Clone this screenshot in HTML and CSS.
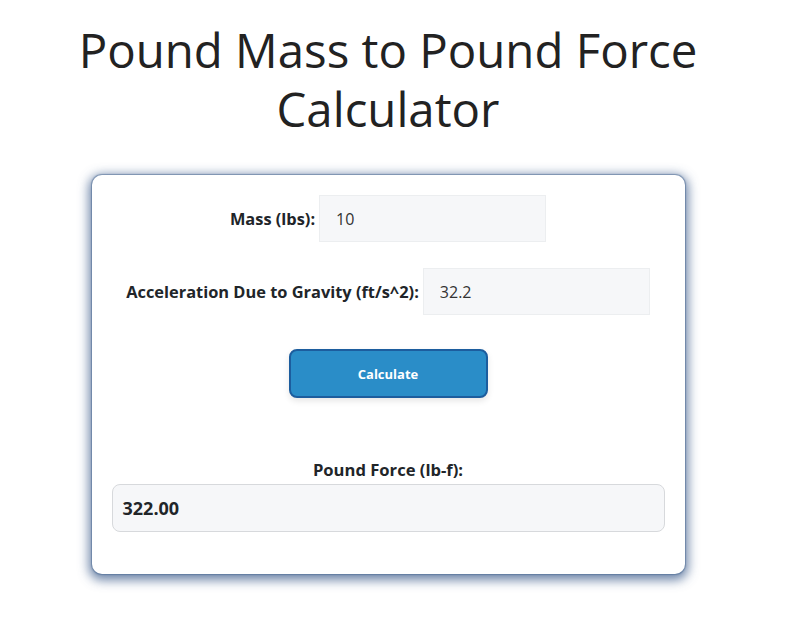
FILE: index.html
```html
<!DOCTYPE html>
<html lang="en">
<head>
    <meta charset="UTF-8">
    <meta name="viewport" content="width=device-width, initial-scale=1.0">
    <title>Pound Mass to Pound Force Calculator</title>
    <link rel="stylesheet" href="styles.css">
</head>
<body>
    <div class="page">
        <h1>Pound Mass to Pound Force Calculator</h1>

        <div class="calc-card">
            <form id="calcForm">
                <div class="form-row">
                    <label for="mass">Mass (lbs):</label>
                    <input type="number" id="mass" value="10">
                </div>

                <div class="form-row">
                    <label for="gravity">Acceleration Due to Gravity (ft/s^2):</label>
                    <input type="number" id="gravity" value="32.2">
                </div>

                <div class="button-row">
                    <button type="submit">Calculate</button>
                </div>
            </form>

            <div class="result">
                <label for="force">Pound Force (lb-f):</label>
                <div class="result-box" id="force">322.00</div>
            </div>
        </div>
    </div>

    <script>
        document.getElementById("calcForm").addEventListener("submit", function (event) {
            event.preventDefault();

            const mass = parseFloat(document.getElementById("mass").value) || 0;
            const gravity = parseFloat(document.getElementById("gravity").value) || 0;

            // lbf = lbm * g / gc, shown here as plain product like the original tool
            document.getElementById("force").textContent = (mass * gravity).toFixed(2);
        });
    </script>
</body>
</html>
```

FILE: styles.css
```css
/* Basic Styling */
body {
    font-family: "Open Sans", "Noto Sans", sans-serif;
    color: #212529;
    background: #fff;
    margin: 0;
}

.page {
    width: 776px;
    padding-bottom: 60px;
    display: flex;
    flex-direction: column;
    align-items: center;
}

h1 {
    font-size: 47.4px;
    font-weight: 400;
    line-height: 59px;
    text-align: center;
    margin: 20px 0 37px;
    color: #222;
}

.calc-card {
    width: 553px;
    padding: 20px 20px 42px;
    background: #fff;
    border-radius: 10px;
    box-shadow: 0 0 1px 1px rgba(80, 110, 150, 0.6), 0 3px 11px 3px rgba(70, 100, 145, 0.8);
}

.form-row {
    display: flex;
    justify-content: center;
    align-items: center;
    gap: 4px;
    margin-bottom: 26px;
}

label {
    font-weight: bold;
    font-size: 16.4px;
}

input {
    width: 227px;
    height: 47px;
    box-sizing: border-box;
    padding: 0 16px;
    border: 1px solid #eceef0;
    background: #f6f7f9;
    font-family: inherit;
    font-size: 16px;
    color: #333;
}

input:focus {
    outline: none;
}

.button-row {
    display: flex;
    justify-content: center;
    margin-top: 34px;
}

button {
    width: 199px;
    height: 49px;
    background-color: #2a8dc8;
    color: #fff;
    border: 2px solid #1c5d9e;
    border-radius: 8px;
    font-family: inherit;
    font-weight: bold;
    font-size: 13px;
    cursor: pointer;
    box-shadow: 0 3px 6px rgba(0, 0, 0, 0.1);
}

button:hover {
    background-color: #2380b8;
}

.result {
    margin-top: 60px;
    text-align: center;
}

.result label {
    display: block;
    font-size: 16.6px;
    margin-bottom: 3px;
}

.result-box {
    height: 48px;
    box-sizing: border-box;
    padding: 0 10px;
    display: flex;
    align-items: center;
    background: #f6f7f9;
    border: 1px solid #d7d9dc;
    border-radius: 8px;
    font-weight: bold;
    font-size: 18px;
}
```
